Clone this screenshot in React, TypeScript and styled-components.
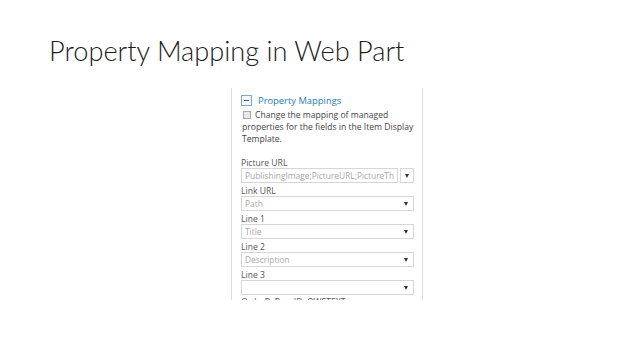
import * as React from 'react';
import styled, { createGlobalStyle } from 'styled-components';

const GlobalStyle = createGlobalStyle`
  html, body {
    margin: 0;
    padding: 0;
    background: #ffffff;
  }
`;

const Slide = styled.div`
  width: 638px;
  height: 359px;
  overflow: hidden;
  background: #ffffff;
  padding: 35px 0 0 49px;
  box-sizing: border-box;
`;

const Title = styled.h1`
  margin: 0;
  font-family: Lato, 'Open Sans', sans-serif;
  font-weight: 300;
  font-size: 27.2px;
  line-height: 32px;
  color: #1c1c1c;
`;

const Panel = styled.div`
  margin: 21px 0 0 182px;
  width: 192px;
  height: 212px;
  overflow: hidden;
  border-left: 1px solid #dcdcdc;
  border-right: 1px solid #dcdcdc;
  box-sizing: border-box;
  padding: 6px 8px 0 9px;
  font-family: 'Open Sans', 'Noto Sans', sans-serif;
  font-size: 8.6px;
  color: #444444;
`;

const Header = styled.div`
  display: flex;
  align-items: center;
  gap: 6px;
  height: 12px;
`;

const CollapseIcon = styled.span`
  display: inline-flex;
  align-items: center;
  justify-content: center;
  width: 9px;
  height: 9px;
  border: 1px solid #7fa8d0;
  background: #f4f7fb;

  &::after {
    content: '';
    width: 5px;
    height: 1px;
    background: #3f5f80;
  }
`;

const HeaderText = styled.span`
  color: #2a7ab8;
  font-size: 9.4px;
`;

const Description = styled.div`
  margin-top: 3px;
  padding-left: 1px;
  line-height: 12px;
`;

const CheckBox = styled.span`
  display: inline-block;
  width: 6px;
  height: 6px;
  border: 1px solid #a8a8a8;
  background: #e8e8e8;
  margin: 0 4px 0 1px;
  vertical-align: -1px;
`;

const Fields = styled.div`
  margin-top: 10px;
  display: flex;
  flex-direction: column;
`;

const Field = styled.div`
  display: flex;
  flex-direction: column;
  height: 28px;
`;

const Label = styled.div`
  line-height: 16px;
  height: 13px;
  color: #555555;
`;

const SelectRow = styled.div`
  display: flex;
  height: 15px;
  width: 173px;
  gap: 2px;
`;

const Box = styled.div<{ $grow?: boolean }>`
  flex: ${p => (p.$grow ? '1' : 'none')};
  display: flex;
  align-items: center;
  border: 1px solid #d6d6d6;
  box-sizing: border-box;
  padding: 0 3px;
  color: #a8a8a8;
  font-size: 8.4px;
  white-space: nowrap;
  overflow: hidden;
  min-width: 0;
`;

const Value = styled.span`
  flex: 1;
  overflow: hidden;
  white-space: nowrap;
`;

const Arrow = styled.span`
  width: 0;
  height: 0;
  border-left: 2.5px solid transparent;
  border-right: 2.5px solid transparent;
  border-top: 4px solid #333333;
  margin-right: 2px;
`;

const ArrowButton = styled(Box)`
  width: 14px;
  justify-content: center;
  padding: 0;

  & > span {
    margin-right: 0;
  }
`;

const ClippedLabel = styled(Label)`
  margin-top: -1px;
`;

type FieldDef = { label: string; value: string; split?: boolean };

const fields: FieldDef[] = [
  { label: 'Picture URL', value: 'PublishingImage;PictureURL;PictureThumbnailURL', split: true },
  { label: 'Link URL', value: 'Path' },
  { label: 'Line 1', value: 'Title' },
  { label: 'Line 2', value: 'Description' },
  { label: 'Line 3', value: '' },
];

export default function App() {
  return (
    <>
      <GlobalStyle />
      <Slide>
        <Title>Property Mapping in Web Part</Title>
        <Panel>
          <Header>
            <CollapseIcon />
            <HeaderText>Property Mappings</HeaderText>
          </Header>
          <Description>
            <CheckBox />
            Change the mapping of managed properties for the fields in the Item Display Template.
          </Description>
          <Fields>
            {fields.map(f => (
              <Field key={f.label}>
                <Label>{f.label}</Label>
                {f.split ? (
                  <SelectRow>
                    <Box $grow>
                      <Value>{f.value}</Value>
                    </Box>
                    <ArrowButton>
                      <Arrow />
                    </ArrowButton>
                  </SelectRow>
                ) : (
                  <SelectRow>
                    <Box $grow>
                      <Value>{f.value}</Value>
                      <Arrow />
                    </Box>
                  </SelectRow>
                )}
              </Field>
            ))}
            <ClippedLabel>OrderByPropID: OWSTEXT</ClippedLabel>
          </Fields>
        </Panel>
      </Slide>
    </>
  );
}
